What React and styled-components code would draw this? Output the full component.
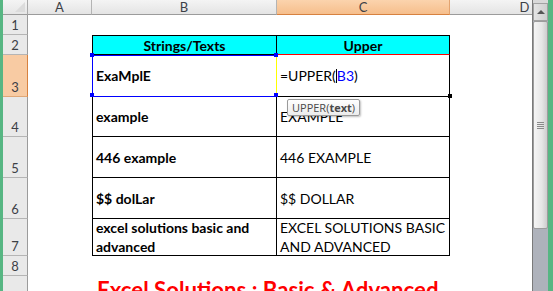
import React from "react";
import styled, { createGlobalStyle } from "styled-components";

const GlobalStyle = createGlobalStyle`
  html, body {
    margin: 0;
    padding: 0;
    overflow: hidden;
    background: #fff;
  }
`;

const ROW_HEIGHTS = [20, 20, 42, 40, 41, 41, 37, 20];
const COLS = ["A", "B", "C", "D"];

const rows = [
  { b: "ExaMplE", c: "formula" },
  { b: "example", c: "EXAMPLE" },
  { b: "446 example", c: "446 EXAMPLE" },
  { b: "$$ dolLar", c: "$$ DOLLAR" },
  { b: "excel solutions basic and advanced", c: "EXCEL SOLUTIONS BASIC AND ADVANCED" },
];

const Window = styled.div`
  width: 553px;
  height: 291px;
  display: flex;
  flex-direction: row;
  overflow: hidden;
  font-family: Lato, "Liberation Sans", sans-serif;
`;

const GreenEdge = styled.div`
  width: ${({ w }) => w}px;
  flex-shrink: 0;
  background: #57b683;
`;

const Sheet = styled.div`
  position: relative;
  flex: 1;
  overflow: hidden;
  display: grid;
  grid-template-columns: 25px 64px 185px 173px 150px;
  grid-template-rows: 15px ${ROW_HEIGHTS.map((h) => h + "px").join(" ")} 40px;
`;

const Corner = styled.div`
  background: linear-gradient(#f4f4f4, #e6e6e6);
  border-right: 1px solid #a9a9a9;
  border-bottom: 1px solid #9b9b9b;
  box-sizing: border-box;
  position: relative;
  overflow: hidden;
  &::after {
    content: "";
    position: absolute;
    right: 2px;
    bottom: 2px;
    border-left: 10px solid transparent;
    border-bottom: 10px solid #dcdcdc;
  }
`;

const ColHead = styled.div`
  box-sizing: border-box;
  background: ${({ active }) =>
    active ? "linear-gradient(#fbd3ad, #f6be8c)" : "linear-gradient(#f4f4f4, #e4e4e4)"};
  border-right: 1px solid ${({ active }) => (active ? "#e3a36f" : "#b4b4b4")};
  border-bottom: 1px solid ${({ active }) => (active ? "#d7813f" : "#9b9b9b")};
  color: #3c4046;
  font-size: 13px;
  line-height: 14px;
  text-align: center;
`;

const RowHead = styled.div`
  box-sizing: border-box;
  background: ${({ active }) => (active ? "#f8cba3" : "#e9e9e9")};
  border-right: 1px solid ${({ active }) => (active ? "#d7813f" : "#9b9b9b")};
  border-bottom: 1px solid ${({ active }) => (active ? "#e0a878" : "#b5b5b5")};
  color: #3c4046;
  font-size: 13px;
  line-height: 18px;
  display: flex;
  align-items: flex-end;
  justify-content: center;
`;

const Blank = styled.div``;

const Cell = styled.div`
  box-sizing: border-box;
  border-right: 1px solid #000;
  border-bottom: 1px solid ${({ bottomColor }) => bottomColor || "#000"};
  border-left: ${({ first }) => (first ? "1px solid #000" : "none")};
  border-top: ${({ top }) => (top ? "1px solid #000" : "none")};
  background: ${({ head }) => (head ? "#00ffff" : "#fff")};
  font-size: 14px;
  font-weight: ${({ bold }) => (bold ? 700 : 400)};
  color: #000;
  display: flex;
  align-items: center;
  justify-content: ${({ head }) => (head ? "center" : "flex-start")};
  padding: 0 3px;
  line-height: 19px;
  overflow: hidden;
`;

const Formula = styled.span`
  white-space: nowrap;
`;

const RefText = styled.span`
  color: #0000ff;
`;

const Caret = styled.span`
  display: inline-block;
  width: 1px;
  height: 14px;
  background: #000;
  vertical-align: -2px;
`;

/* reference highlight drawn over B3 while the formula is edited */
const RefBox = styled.div`
  position: absolute;
  left: 89px;
  top: 55px;
  width: 185px;
  height: 42px;
  box-sizing: border-box;
  border: 1px solid #0000ff;
  border-right-color: #ffff00;
  pointer-events: none;
`;

const Handle = styled.div`
  position: absolute;
  width: 4px;
  height: 4px;
  background: ${({ color }) => color};
  left: ${({ x }) => x};
  top: ${({ y }) => y};
`;

const Title = styled.div`
  grid-column: 3 / 5;
  grid-row: 10;
  padding: 1px 0 0 5px;
  color: #ff0000;
  font-weight: 700;
  font-size: 22.2px;
  line-height: 26px;
  white-space: nowrap;
`;

const Tooltip = styled.div`
  position: absolute;
  left: 284px;
  top: 99px;
  height: 17px;
  box-sizing: border-box;
  padding: 0 4px;
  background: linear-gradient(#ffffff, #ececec);
  border: 1px solid #9a9a9a;
  border-radius: 2px;
  box-shadow: 1px 1px 2px rgba(0, 0, 0, 0.25);
  font-family: "Open Sans", "Liberation Sans", sans-serif;
  font-size: 11px;
  line-height: 15px;
  color: #4a4a4a;
  white-space: nowrap;
  b {
    font-weight: 700;
  }
`;

const ScrollBar = styled.div`
  width: 16px;
  flex-shrink: 0;
  box-sizing: border-box;
  border-left: 1px solid #7a7a7a;
  background: #aeb2bb;
  display: flex;
  flex-direction: column;
`;

const ScrollTop = styled.div`
  height: 3px;
  background: #d9d9d9;
`;

const ArrowBtn = styled.div`
  height: 18px;
  box-sizing: border-box;
  background: linear-gradient(90deg, #e4e4e4, #cfcfcf);
  border: 1px solid #a2a2a2;
  display: flex;
  align-items: center;
  justify-content: center;
  &::before {
    content: "";
    border-left: 4px solid transparent;
    border-right: 4px solid transparent;
    border-bottom: 4px solid #555;
  }
`;

const Thumb = styled.div`
  height: 208px;
  box-sizing: border-box;
  background: linear-gradient(90deg, #f4f4f4, #e6e6e6 60%, #cdcdcd);
  border: 1px solid #9c9c9c;
  border-radius: 2px;
  display: flex;
  align-items: center;
  justify-content: center;
`;

const Grip = styled.div`
  width: 7px;
  height: 7px;
  background: repeating-linear-gradient(#8a8a8a 0 1px, transparent 1px 2px);
`;

function App() {
  return (
    <>
      <GlobalStyle />
      <Window>
        <GreenEdge w={3} />
        <Sheet>
          <Corner />
          {COLS.map((c) => (
            <ColHead key={c} active={c === "C"}>
              {c}
            </ColHead>
          ))}

          {/* row 1 */}
          <RowHead>1</RowHead>
          <Blank />
          <Blank />
          <Blank />
          <Blank />

          {/* row 2: table header */}
          <RowHead>2</RowHead>
          <Blank />
          <Cell head bold first top>
            Strings/Texts
          </Cell>
          <Cell head bold top bottomColor="#ff0000">
            Upper
          </Cell>
          <Blank />

          {rows.map((r, i) => (
            <React.Fragment key={i}>
              <RowHead active={i === 0}>{i + 3}</RowHead>
              <Blank />
              <Cell bold first>
                {r.b}
              </Cell>
              <Cell>
                {i === 0 ? (
                  <Formula>
                    =UPPER(
                    <Caret />
                    <RefText>B3</RefText>)
                  </Formula>
                ) : (
                  r.c
                )}
              </Cell>
              <Blank />
            </React.Fragment>
          ))}

          <RowHead>8</RowHead>
          <Blank />
          <Blank />
          <Blank />
          <Blank />

          <RowHead />
          <Blank />
          <Title>Excel Solutions : Basic &amp; Advanced</Title>

          <RefBox>
            <Handle color="#0000ff" x="-3px" y="-3px" />
            <Handle color="#0000ff" x="-3px" y="37px" />
            <Handle color="#0000ff" x="181px" y="-3px" />
            <Handle color="#0000ff" x="181px" y="37px" />
          </RefBox>
          <Handle color="#000" x="445px" y="94px" />

          <Tooltip>
            UPPER(<b>text</b>)
          </Tooltip>
        </Sheet>
        <ScrollBar>
          <ScrollTop />
          <ArrowBtn />
          <Thumb>
            <Grip />
          </Thumb>
        </ScrollBar>
        <GreenEdge w={5} />
      </Window>
    </>
  );
}

export default App;
